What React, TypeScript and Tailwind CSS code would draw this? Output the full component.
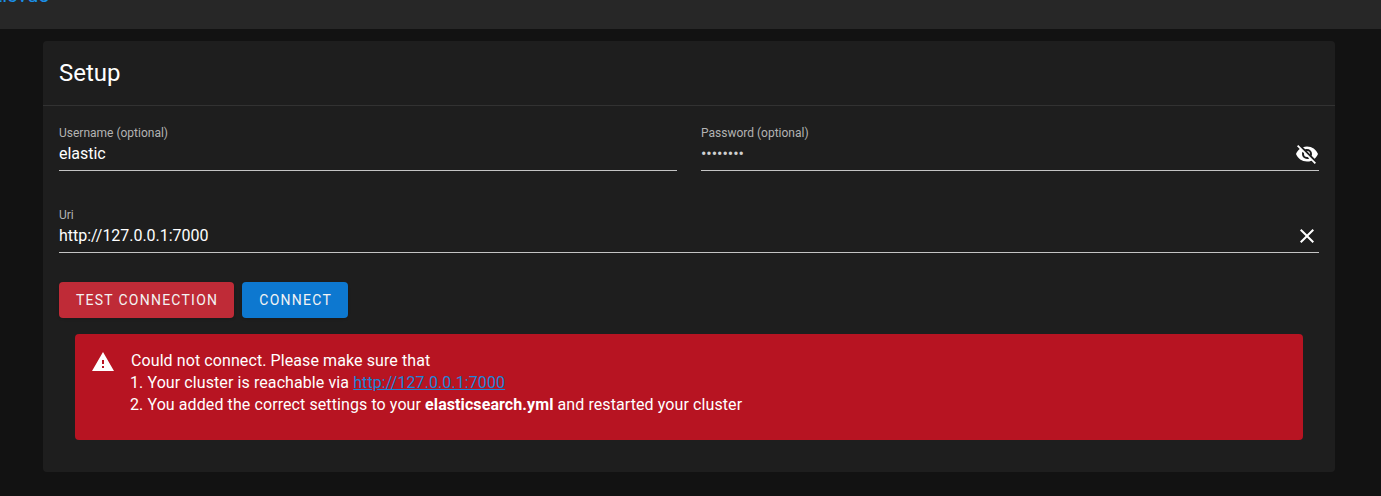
const eyeOff = "M11.83,9L15,12.16C15,12.11 15,12.05 15,12A3,3 0 0,0 12,9C11.94,9 11.89,9 11.83,9M7.53,9.8L9.08,11.35C9.03,11.56 9,11.77 9,12A3,3 0 0,0 12,15C12.22,15 12.44,14.97 12.65,14.92L14.2,16.47C13.53,16.8 12.79,17 12,17A5,5 0 0,1 7,12C7,11.21 7.2,10.47 7.53,9.8M2,4.27L4.28,6.55L4.73,7C3.08,8.3 1.78,10 1,12C2.73,16.39 7,19.5 12,19.5C13.55,19.5 15.03,19.2 16.38,18.66L16.81,19.08L19.73,22L21,20.73L3.27,3M12,7A5,5 0 0,1 17,12C17,12.64 16.87,13.26 16.64,13.82L19.57,16.75C21.07,15.5 22.27,13.86 23,12C21.27,7.61 17,4.5 12,4.5C10.6,4.5 9.26,4.75 8,5.2L10.17,7.35C10.74,7.13 11.35,7 12,7Z";
const close = "M19,6.41L17.59,5L12,10.59L6.41,5L5,6.41L10.59,12L5,17.59L6.41,19L12,13.41L17.59,19L19,17.59L13.41,12L19,6.41Z";
const alert = "M13,14H11V10H13M13,18H11V16H13M1,21H23L12,2L1,21Z";

function Icon({ d }: { d: string }) {
  return (
    <svg viewBox="0 0 24 24" className="w-6 h-6 shrink-0" fill="#ffffff">
      <path d={d} />
    </svg>
  );
}

function Field({ label, value, icon, dim }: { label: string; value: string; icon?: string; dim?: boolean }) {
  return (
    <div className="flex flex-col border-b border-[#c4c4c4] h-[46px]">
      <div className="text-[12px] leading-[16px] text-[#b3b3b3] h-[16px]">{label}</div>
      <div className="flex items-center justify-between h-[25px]">
        <span className={dim ? "text-[16px] leading-[25px] text-[#d0d0d0] tracking-[-0.03px]" : "text-[16px] leading-[25px] text-white tracking-[-0.03px]"}>{value}</span>
        {icon && <Icon d={icon} />}
      </div>
    </div>
  );
}

export default function App() {
  return (
    <div className="h-[496px] overflow-hidden bg-[#121212] font-['Roboto',sans-serif] text-white">
      <header className="h-[29px] bg-[#272727] overflow-hidden">
        <div className="-mt-[19px] -ml-[41px] text-[20px] leading-[28px] text-[#1b8fe8]">elasticvue</div>
      </header>
      <main className="pl-[43px] pr-[46px] pt-[12px]">
        <section className="bg-[#1e1e1e] rounded h-[431px]">
          <h1 className="h-[64px] px-4 text-[24px] leading-[64px] font-normal border-b border-[#323232] box-content">Setup</h1>
          <div className="px-4 pt-[19px]">
            <div className="grid grid-cols-2 gap-6">
              <Field label="Username (optional)" value="elastic" />
              <Field label="Password (optional)" value="••••••••" icon={eyeOff} dim />
            </div>
            <div className="mt-[36px]">
              <Field label="Uri" value="http://127.0.0.1:7000" icon={close} />
            </div>
            <div className="flex gap-2 mt-[29px]">
              <button className="h-9 pl-[17px] pr-4 rounded bg-[#bf2b37] text-[14px] font-normal tracking-[1.25px] text-[#f3f3f3] shadow-sm">TEST CONNECTION</button>
              <button className="h-9 pl-[17px] pr-4 rounded bg-[#0d78d0] text-[14px] font-normal tracking-[1.25px] text-[#f3f3f3] shadow-sm">CONNECT</button>
            </div>
            <div className="mx-4 mt-4 h-[106px] rounded bg-[#b71422] p-4 flex gap-4 text-[16px] leading-[22px] tracking-[0.09px]">
              <Icon d={alert} />
              <div>
                <div>Could not connect. Please make sure that</div>
                <ol className="list-decimal list-inside -ml-px">
                  <li>Your cluster is reachable via <a className="text-[#2085d8] underline" href="#">http://127.0.0.1:7000</a></li>
                  <li>You added the correct settings to your <b className="font-bold">elasticsearch.yml</b> and restarted your cluster</li>
                </ol>
              </div>
            </div>
          </div>
        </section>
      </main>
    </div>
  );
}
